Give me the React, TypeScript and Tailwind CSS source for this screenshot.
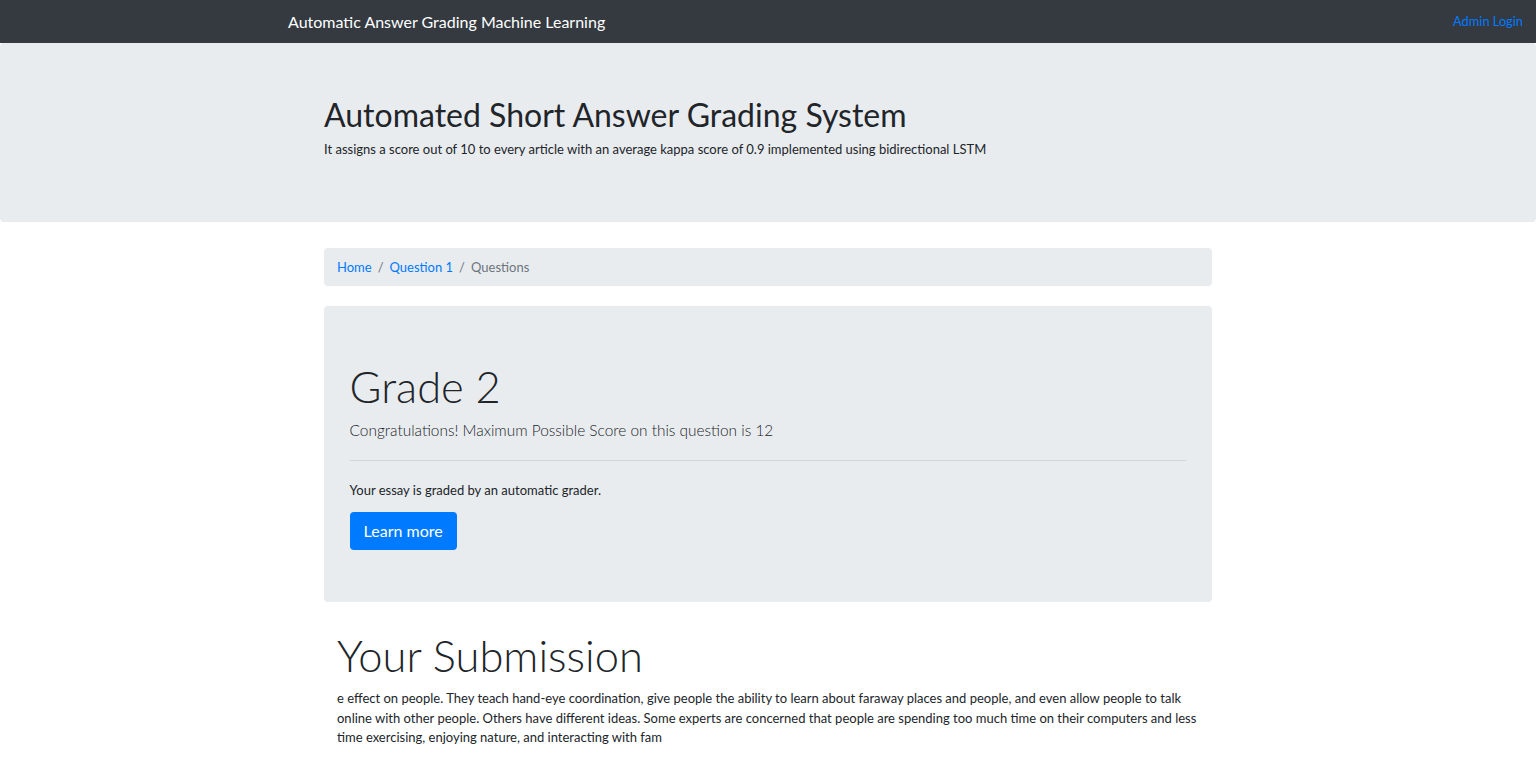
const crumbs = [
  { label: 'Home', href: '#' },
  { label: 'Question 1', href: '#' },
]

export default function App() {
  return (
    <div className="min-h-screen bg-white font-['Segoe_UI',Lato,sans-serif] text-[13px] leading-[1.5] text-[#212529]">
      {/* navbar */}
      <nav className="flex h-[43px] items-center justify-between bg-[#343a40] pl-[288px] pr-[13px]">
        <a href="#" className="text-[16px] text-white">
          Automatic Answer Grading Machine Learning
        </a>
        <a href="#" className="text-[12.8px] text-[#007bff]">
          Admin Login
        </a>
      </nav>

      {/* top jumbotron */}
      <header className="mb-[26px] h-[179px] rounded-[4px] bg-[#e9ecef]">
        <div className="mx-auto w-[912px] px-[12px] pt-[53px]">
          <h1 className="text-[32px] leading-[1.2] font-normal">Automated Short Answer Grading System</h1>
          <p className="mt-[6px]">
            It assigns a score out of 10 to every article with an average kappa score of 0.9 implemented using bidirectional LSTM
          </p>
        </div>
      </header>

      <main className="mx-auto w-[912px] px-[12px]">
        <ol className="flex h-[38px] items-center gap-[6px] rounded-[4px] bg-[#e9ecef] px-[13px] pt-[1px]">
          {crumbs.map((c) => (
            <li key={c.label} className="flex items-center gap-[6px]">
              <a href={c.href} className="text-[#007bff]">{c.label}</a>
              <span className="text-[#6c757d]">/</span>
            </li>
          ))}
          <li className="text-[#6c757d]">Questions</li>
        </ol>

        <section className="mt-[20px] h-[296px] rounded-[4px] bg-[#e9ecef] px-[25.6px] pt-[54px]">
          <h1 className="text-[43.5px] leading-[1.2] font-light">Grade 2</h1>
          <p className="mt-[7px] text-[15.4px] font-light">Congratulations! Maximum Possible Score on this question is 12</p>
          <hr className="mt-[18px] mb-[20px] border-t border-[rgba(0,0,0,0.1)]" />
          <p>Your essay is graded by an automatic grader.</p>
          <a
            href="#"
            className="mt-[11px] inline-flex h-[38px] items-center rounded-[4px] bg-[#007bff] px-[14px] text-[16px] text-white"
          >
            Learn more
          </a>
        </section>

        <div className="px-[13px] pt-[27px]">
          <h1 className="text-[43.5px] leading-[1.2] font-light">Your Submission</h1>
          <p className="mt-[8px]">
            e effect on people. They teach hand-eye coordination, give people the ability to learn about faraway places and
            people, and even allow people to talk online with other people. Others have different ideas. Some experts are
            concerned that people are spending too much time on their computers and less time exercising, enjoying nature,
            and interacting with fam
          </p>
        </div>
      </main>
    </div>
  )
}
